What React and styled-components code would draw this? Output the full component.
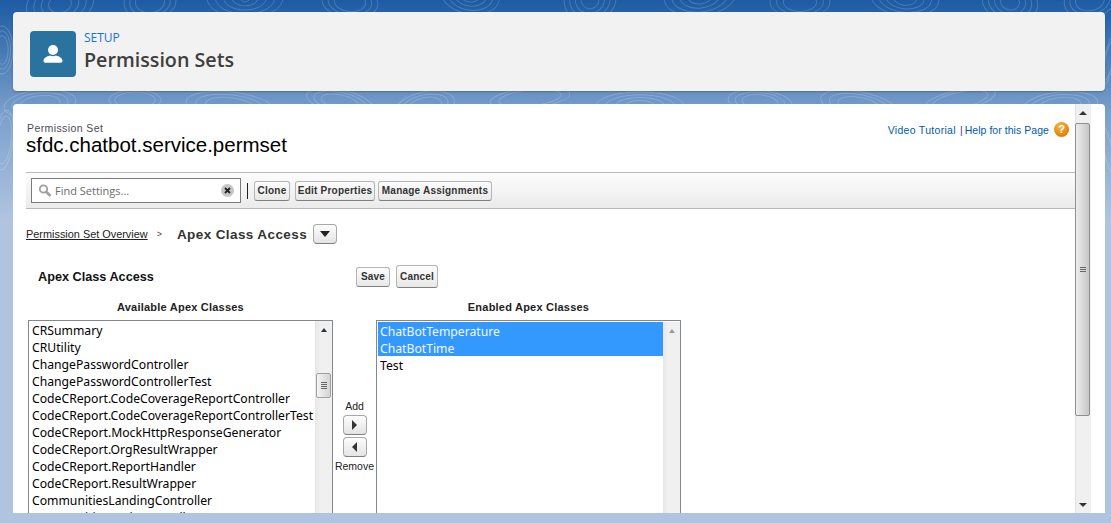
import React from "react";
import styled, { createGlobalStyle } from "styled-components";

const Global = createGlobalStyle`
  html, body { margin: 0; padding: 0; height: 100%; overflow: hidden; }
  body { font-family: "Liberation Sans", Arial, sans-serif; }
  #root { height: 100%; }
`;

const Page = styled.div`
  position: relative;
  width: 1111px;
  height: 523px;
  overflow: hidden;
  padding: 12px 6px 10px 13px;
  box-sizing: border-box;
  display: flex;
  flex-direction: column;
  gap: 13px;
  background: linear-gradient(180deg, #1c5ba3 0%, #7ba0cc 22%, #b0c4df 42%, #b0c4df 100%);
`;

const Contours = styled.svg`
  position: absolute;
  left: 0;
  top: 0;
  width: 1111px;
  height: 200px;
  fill: none;
  stroke: rgba(255, 255, 255, 0.18);
  stroke-width: 1;
`;

const Header = styled.header`
  position: relative;
  height: 79px;
  flex: none;
  box-sizing: border-box;
  background: #f3f2f2;
  border-radius: 4px;
  box-shadow: 0 1px 2px rgba(0, 0, 0, 0.25);
  display: flex;
  align-items: center;
  padding: 5px 0 0 17px;
  gap: 8px;
`;

const IconTile = styled.div`
  width: 46px;
  height: 46px;
  border-radius: 4px;
  background: #2a739e;
  display: flex;
  align-items: center;
  justify-content: center;
`;

const Titles = styled.div`
  display: flex;
  flex-direction: column;
  font-family: "Open Sans", sans-serif;
`;

const Eyebrow = styled.div`
  font-size: 12px;
  line-height: 14px;
  color: #1573d6;
  font-family: "Open Sans", sans-serif;
  letter-spacing: -0.05px;
  margin-top: -2px;
`;

const HeaderTitle = styled.div`
  font-size: 19.7px;
  line-height: 30px;
  font-weight: 600;
  color: #3e3e3c;
`;

const Card = styled.main`
  position: relative;
  flex: 1;
  min-height: 0;
  background: #fff;
  border-radius: 4px 4px 0 0;
  display: flex;
  overflow: hidden;
`;

const Content = styled.div`
  flex: 1;
  min-width: 0;
  padding: 19px 0 0 13px;
  display: flex;
  flex-direction: column;
`;

const TitleRow = styled.div`
  display: flex;
  justify-content: space-between;
  height: 35px;
  margin-bottom: 15px;
`;

const TitleCol = styled.div`
  display: flex;
  flex-direction: column;
`;

const SmallLabel = styled.div`
  font-size: 10.5px;
  line-height: 10px;
  color: #4a4a56;
  font-weight: 400;
  letter-spacing: 0.4px;
  margin-left: 1px;
`;

const PageTitle = styled.h1`
  margin: 0;
  font-size: 20.500px;
  line-height: 24px;
  font-weight: 400;
  color: #000;
`;

const HelpLinks = styled.div`
  display: flex;
  align-items: center;
  height: 17px;
  margin: -2px 7px 0 0;
  font-size: 10.5px;
  color: #015ba7;
  gap: 4px;
  font-family: "Liberation Sans", sans-serif;
`;

const HelpLink = styled.a`
  letter-spacing: ${(p) => p.$spacing}px;
`;

const Sep = styled.span`
  color: #4a3a7a;
  margin-right: -2px;
`;

const HelpIcon = styled.span`
  width: 15px;
  height: 15px;
  border-radius: 50%;
  margin-left: 1px;
  background: radial-gradient(circle at 40% 30%, #f8b73c, #dd7d0c 75%);
  color: #fff;
  font-weight: 700;
  font-size: 11px;
  line-height: 15px;
  text-align: center;
`;

const Toolbar = styled.div`
  height: 37px;
  flex: none;
  box-sizing: border-box;
  border-top: 1px solid #b8b8b8;
  border-bottom: 1px solid #b8b8b8;
  background: linear-gradient(180deg, #fcfcfc 0%, #ebebeb 100%);
  display: flex;
  align-items: center;
  padding-left: 5px;
`;

const SearchBox = styled.div`
  width: 210px;
  height: 25px;
  box-sizing: border-box;
  border: 1px solid #7a7a7a;
  background: #fff;
  display: flex;
  align-items: center;
  padding: 0 6px 0 6px;
  gap: 3px;
  margin-right: 6px;
`;

const SearchText = styled.span`
  flex: 1;
  font-family: "Open Sans", sans-serif;
  font-size: 11px;
  color: #6b6b6b;
`;

const Divider = styled.span`
  width: 1px;
  height: 16px;
  background: #222;
  margin-right: 6px;
`;

const ToolButtons = styled.div`
  display: flex;
  align-items: center;
`;

const Btn = styled.button`
  height: ${(p) => p.$h || 20}px;
  width: ${(p) => p.$w}px;
  margin-right: ${(p) => p.$mr || 0}px;
  box-sizing: border-box;
  padding: 0;
  border: 1px solid #b5b5b5;
  border-bottom-color: #7f7f7f;
  border-radius: 3px;
  background: linear-gradient(180deg, #fdfdfd 0%, #e8e8e8 100%);
  font-family: "Liberation Sans", sans-serif;
  font-size: 10px;
  font-weight: 700;
  letter-spacing: 0.22px;
  color: #333;
  display: inline-flex;
  align-items: center;
  justify-content: center;
`;

const Crumbs = styled.div`
  display: flex;
  align-items: center;
  height: 20px;
  margin-top: 15px;
`;

const CrumbLink = styled.a`
  font-size: 10.900px;
  color: #222;
  text-decoration: underline;
`;

const CrumbArrow = styled.span`
  font-size: 9px;
  color: #444;
  margin: 0 15px 0 9px;
`;

const CrumbCurrent = styled.span`
  font-size: 13.500px;
  font-weight: 700;
  color: #333;
  letter-spacing: 0.4px;
  margin-right: 6px;
`;

const SectionRow = styled.div`
  display: flex;
  align-items: center;
  height: 24px;
  margin-top: 21px;
  padding-left: 12px;
`;

const SectionTitle = styled.h2`
  margin: 0;
  width: 318px;
  font-size: 12.700px;
  font-weight: 700;
  color: #111;
`;

const SectionButtons = styled.div`
  display: flex;
  align-items: center;
  gap: 6px;
`;

const Duel = styled.div`
  display: grid;
  grid-template-columns: 305px 43px 305px;
  margin-top: 12px;
  padding-left: 2px;
`;

const ColHead = styled.div`
  font-size: 11px;
  font-weight: 700;
  line-height: 14px;
  color: #222;
  letter-spacing: 0.22px;
  text-align: center;
  margin-bottom: 6px;
`;

const ListBox = styled.div`
  height: 200px;
  box-sizing: border-box;
  border: 1px solid #828790;
  background: #fff;
  display: flex;
  overflow: hidden;
  padding: ${(p) => (p.$pad ? "1px 0 0 1px" : "0")};
`;

const Items = styled.ul`
  flex: 1;
  min-width: 0;
  margin: 0;
  padding: ${(p) => (p.$flush ? 0 : "1px 0 0 0")};
  list-style: none;
`;

const Item = styled.li`
  height: 17px;
  line-height: ${(p) => (p.$low ? 19 : 17)}px;
  font-family: "Noto Sans", sans-serif;
  font-size: 12.200px;
  padding-left: ${(p) => p.$inset ?? 3}px;
  white-space: nowrap;
  background: ${(p) => (p.$selected ? "#3399ff" : "transparent")};
  color: ${(p) => (p.$selected ? "#f2f8ff" : "#000")};
`;

const Track = styled.div`
  position: relative;
  width: 17px;
  flex: none;
  background: linear-gradient(90deg, #e6e6e6 0%, #f0f0f0 30%, #f0f0f0 100%);
  display: flex;
  justify-content: center;
`;

const Arrow = styled.span`
  position: absolute;
  top: ${(p) => p.$top}px;
  width: 0;
  height: 0;
  border-left: 3px solid transparent;
  border-right: 3px solid transparent;
  border-bottom: 4px solid ${(p) => p.$color || "#333"};
`;

const Thumb = styled.div`
  position: absolute;
  top: 52px;
  left: 1px;
  width: 15px;
  height: 25px;
  box-sizing: border-box;
  border: 1px solid #a0a0a0;
  border-radius: 2px;
  background: linear-gradient(90deg, #f4f4f4, #d4d4d4);
  display: flex;
  flex-direction: column;
  justify-content: center;
  align-items: center;
  gap: 1px;
`;

const Grip = styled.i`
  display: block;
  width: 6px;
  height: 1px;
  background: #666;
`;

const Mover = styled.div`
  display: flex;
  flex-direction: column;
  align-items: center;
  padding-top: 99px;
  font-size: 10.5px;
  color: #222;
  line-height: 14px;
  gap: 2px;
`;

const MoveBtn = styled.button`
  width: 24px;
  height: 20px;
  padding: 0;
  box-sizing: border-box;
  border: 1px solid #a8a8a8;
  border-bottom-color: #7f7f7f;
  border-radius: 4px;
  background: linear-gradient(180deg, #fdfdfd, #e4e4e4);
  display: flex;
  align-items: center;
  justify-content: center;
`;

const Tri = styled.span`
  width: 0;
  height: 0;
  border-top: 5px solid transparent;
  border-bottom: 5px solid transparent;
  ${(p) => (p.$left ? "border-right: 5px solid #333;" : "border-left: 5px solid #333;")}
`;

const PageScroll = styled.div`
  position: relative;
  width: 15px;
  flex: none;
  margin-right: 14px;
  margin-left: -1px;
  background: #f0f0f0;
  border-left: 1px solid #e2e2e2;
`;

const PageThumb = styled.div`
  position: absolute;
  top: 19px;
  left: -1px;
  width: 15px;
  height: 293px;
  box-sizing: border-box;
  border: 1px solid #8f8f8f;
  border-radius: 2px;
  background: linear-gradient(90deg, #ededed, #c6c6c6);
  display: flex;
  flex-direction: column;
  align-items: center;
  justify-content: center;
  gap: 1px;
`;

const PageArrow = styled.span`
  position: absolute;
  left: 3px;
  ${(p) => (p.$down ? "bottom: 6px; border-top: 4px solid #333;" : "top: 7px; border-bottom: 4px solid #333;")}
  width: 0;
  height: 0;
  border-left: 4px solid transparent;
  border-right: 4px solid transparent;
`;

const available = [
  "CRSummary",
  "CRUtility",
  "ChangePasswordController",
  "ChangePasswordControllerTest",
  "CodeCReport.CodeCoverageReportController",
  "CodeCReport.CodeCoverageReportControllerTest",
  "CodeCReport.MockHttpResponseGenerator",
  "CodeCReport.OrgResultWrapper",
  "CodeCReport.ReportHandler",
  "CodeCReport.ResultWrapper",
  "CommunitiesLandingController",
  "CommunitiesLoginController",
];

/* Topographic contour rings for the page backdrop: [cx, cy, rx, ry, rings]. */
const rings = [
  [60, 4, 34, 22, 4], [150, 2, 26, 18, 3], [245, -2, 38, 20, 5], [350, 2, 28, 16, 3],
  [470, -6, 30, 20, 5], [590, 0, 26, 22, 4], [700, -4, 36, 20, 4], [800, 2, 30, 16, 3],
  [905, -2, 34, 18, 4], [1010, 2, 28, 20, 4], [1090, 0, 26, 18, 3],
  [40, 104, 36, 14, 3], [135, 100, 26, 10, 2], [230, 106, 44, 14, 3], [340, 102, 34, 12, 3],
  [425, 106, 30, 14, 3], [530, 98, 40, 10, 2], [640, 106, 44, 14, 4], [760, 102, 32, 12, 3],
  [860, 106, 40, 14, 3], [960, 100, 36, 10, 2], [1060, 106, 38, 14, 3],
  [2, 50, 11, 24, 3], [4, 140, 9, 30, 2], [1109, 60, 5, 26, 2], [1108, 150, 4, 24, 1],
];

export default function App() {
  return (
    <Page>
      <Global />
      <Contours viewBox="0 0 1111 200">
        {rings.flatMap(([cx, cy, rx, ry, n], i) =>
          Array.from({ length: n }, (_, k) => (
            <ellipse
              key={`${i}-${k}`}
              cx={cx}
              cy={cy}
              rx={rx * (1 - k * 0.22)}
              ry={ry * (1 - k * 0.2)}
              transform={`rotate(${(i % 5) * 6 - 12} ${cx} ${cy})`}
            />
          ))
        )}
      </Contours>

      <Header>
        <IconTile>
          <svg width="22" height="22" viewBox="0 0 22 22" fill="#fff">
            <circle cx="11" cy="7" r="5" />
            <path d="M1.500 18c0-3 3-4.500 6.500-5.500 1.800 1 4.200 1 6 0 3.500 1 6.500 2.500 6.500 5.500 0 1.200-.8 1.700-1.800 1.700H3.300c-1 0-1.800-.5-1.800-1.700z" />
          </svg>
        </IconTile>
        <Titles>
          <Eyebrow>SETUP</Eyebrow>
          <HeaderTitle>Permission Sets</HeaderTitle>
        </Titles>
      </Header>

      <Card>
        <Content>
          <TitleRow>
            <TitleCol>
              <SmallLabel>Permission Set</SmallLabel>
              <PageTitle>sfdc.chatbot.service.permset</PageTitle>
            </TitleCol>
            <HelpLinks>
              <HelpLink $spacing={0.3}>Video Tutorial</HelpLink>
              <Sep>|</Sep>
              <HelpLink $spacing={0.05}>Help for this Page</HelpLink>
              <HelpIcon>?</HelpIcon>
            </HelpLinks>
          </TitleRow>

          <Toolbar>
            <SearchBox>
              <svg width="14" height="14" viewBox="0 0 14 14" fill="none" stroke="#a0a0a0">
                <circle cx="5.500" cy="5" r="3.700" strokeWidth="1.800" />
                <path d="M8.500 8L12.500 12" strokeWidth="2.600" />
              </svg>
              <SearchText>Find Settings...</SearchText>
              <svg width="13" height="13" viewBox="0 0 13 13">
                <circle cx="6.500" cy="6.500" r="6.500" fill="#c6c6c6" />
                <path d="M4 4l5 5M9 4l-5 5" stroke="#222" strokeWidth="1.800" />
              </svg>
            </SearchBox>
            <Divider />
            <ToolButtons>
              <Btn $w={36} $mr={5}>Clone</Btn>
              <Btn $w={80} $mr={3}>Edit Properties</Btn>
              <Btn $w={114}>Manage Assignments</Btn>
            </ToolButtons>
          </Toolbar>

          <Crumbs>
            <CrumbLink>Permission Set Overview</CrumbLink>
            <CrumbArrow>&gt;</CrumbArrow>
            <CrumbCurrent>Apex Class Access</CrumbCurrent>
            <MoveBtn>
              <svg width="10" height="6" viewBox="0 0 10 6" fill="#222"><path d="M0 0h10L5 6z" /></svg>
            </MoveBtn>
          </Crumbs>

          <SectionRow>
            <SectionTitle>Apex Class Access</SectionTitle>
            <SectionButtons>
              <Btn $w={34} $h={20}>Save</Btn>
              <Btn $w={42} $h={23}>Cancel</Btn>
            </SectionButtons>
          </SectionRow>

          <Duel>
            <div>
              <ColHead>Available Apex Classes</ColHead>
              <ListBox>
                <Items>
                  {available.map((n) => (
                    <Item key={n}>{n}</Item>
                  ))}
                </Items>
                <Track>
                  <Arrow $top={7} />
                  <Thumb><Grip /><Grip /><Grip /><Grip /></Thumb>
                </Track>
              </ListBox>
            </div>
            <Mover>
              <span>Add</span>
              <MoveBtn><Tri /></MoveBtn>
              <MoveBtn><Tri $left /></MoveBtn>
              <span>Remove</span>
            </Mover>
            <div>
              <ColHead>Enabled Apex Classes</ColHead>
              <ListBox $pad>
                <Items $flush>
                  <Item $selected $low $inset={2}>ChatBotTemperature</Item>
                  <Item $selected $low $inset={2}>ChatBotTime</Item>
                  <Item $low $inset={2}>Test</Item>
                </Items>
                <Track>
                  <Arrow $top={7} $color="#999" />
                </Track>
              </ListBox>
            </div>
          </Duel>
        </Content>
        <PageScroll>
          <PageArrow />
          <PageThumb><Grip /><Grip /><Grip /></PageThumb>
          <PageArrow $down />
        </PageScroll>
      </Card>
    </Page>
  );
}
